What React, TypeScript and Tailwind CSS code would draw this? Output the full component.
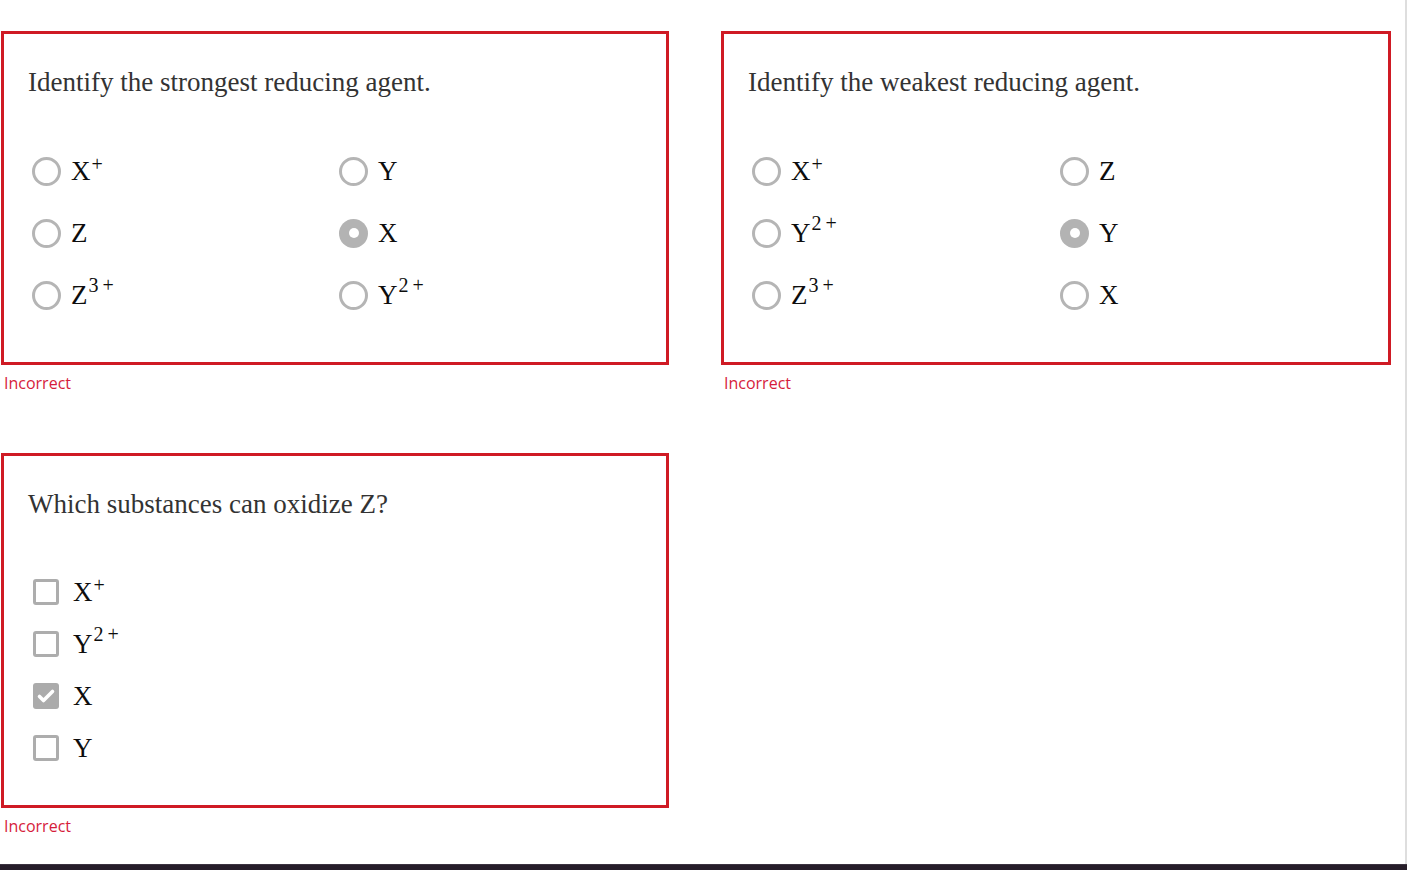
import type { ReactNode } from 'react';

const serif = "font-['Liberation_Serif','Times_New_Roman',serif]";

type Opt = { base: string; sup?: string; big?: boolean; selected?: boolean };

function Label({ o }: { o: Opt }) {
  return (
    <span className={`${serif} text-[27px] leading-[36px] text-[#0d0d0d]`}>
      {o.base}
      {o.sup && (
        <sup
          className={
            o.big
              ? 'relative -top-[12px] ml-[1px] text-[20px] leading-none'
              : 'relative -top-[9px] ml-[1px] text-[20px] leading-none'
          }
        >
          {o.sup}
        </sup>
      )}
    </span>
  );
}

function Radio({ o }: { o: Opt }) {
  return (
    <div className="h-[62px] flex items-center gap-[10px] pl-1">
      {o.selected ? (
        <span className="w-[29px] h-[29px] rounded-full bg-[#b3b3b3] flex items-center justify-center shrink-0">
          <span className="w-[10px] h-[10px] rounded-full bg-white" />
        </span>
      ) : (
        <span className="w-[29px] h-[29px] rounded-full border-[3px] border-[#b5b5b5] bg-white shrink-0" />
      )}
      <Label o={o} />
    </div>
  );
}

function Check({ o }: { o: Opt }) {
  return (
    <div className="h-[52px] flex items-center gap-[14px] pl-[5px]">
      {o.selected ? (
        <span className="w-[26px] h-[26px] rounded-[3px] bg-[#ababab] flex items-center justify-center shrink-0">
          <svg width="20" height="20" viewBox="0 0 20 20" fill="none">
            <path d="M3.5 10.5l4 4 9-9" stroke="#fff" strokeWidth="3.6" strokeLinecap="round" strokeLinejoin="round" />
          </svg>
        </span>
      ) : (
        <span className="w-[26px] h-[26px] rounded-[3px] border-[3px] border-[#adadad] bg-white shrink-0" />
      )}
      <Label o={o} />
    </div>
  );
}

function Card({ question, height, children }: { question: string; height: string; children: ReactNode }) {
  return (
    <div>
      <div className={`${height} border-[3px] border-[#cf1a24] px-6 pt-[30px]`}>
        <p className={`${serif} text-[27px] leading-[36px] text-[#333]`}>{question}</p>
        {children}
      </div>
      <p className="mt-[6px] pl-[3px] font-['Open_Sans',sans-serif] text-[16px] font-medium leading-[24px] text-[#d61c3b]">
        Incorrect
      </p>
    </div>
  );
}

export default function App() {
  const q1: Opt[] = [
    { base: 'X', sup: '+' },
    { base: 'Y' },
    { base: 'Z' },
    { base: 'X', selected: true },
    { base: 'Z', sup: '3\u2009+', big: true },
    { base: 'Y', sup: '2\u2009+', big: true },
  ];
  const q2: Opt[] = [
    { base: 'X', sup: '+' },
    { base: 'Z' },
    { base: 'Y', sup: '2\u2009+', big: true },
    { base: 'Y', selected: true },
    { base: 'Z', sup: '3\u2009+', big: true },
    { base: 'X' },
  ];
  const q3: Opt[] = [
    { base: 'X', sup: '+' },
    { base: 'Y', sup: '2\u2009+', big: true },
    { base: 'X', selected: true },
    { base: 'Y' },
  ];

  return (
    <div className="h-[870px] flex flex-col bg-white overflow-hidden">
      <div className="flex-1 flex min-h-0">
        <div className="w-[1405px] pl-[1px] pt-[31px]">
          <div className="grid grid-cols-[668px_670px] gap-x-[52px]">
            <Card question="Identify the strongest reducing agent." height="h-[334px]">
              <div className="grid grid-cols-2 mt-10">
                {q1.map((o, i) => (
                  <Radio key={i} o={o} />
                ))}
              </div>
            </Card>
            <Card question="Identify the weakest reducing agent." height="h-[334px]">
              <div className="grid grid-cols-2 mt-10">
                {q2.map((o, i) => (
                  <Radio key={i} o={o} />
                ))}
              </div>
            </Card>
          </div>
          <div className="mt-[58px] w-[668px]">
            <Card question="Which substances can oxidize Z?" height="h-[355px]">
              <div className="mt-[44px]">
                {q3.map((o, i) => (
                  <Check key={i} o={o} />
                ))}
              </div>
            </Card>
          </div>
        </div>
        <div className="w-[2px] bg-[#dedede]" />
      </div>
      <div className="h-[6px] bg-[#261d29] border-t border-[#3b3340]" />
    </div>
  );
}
